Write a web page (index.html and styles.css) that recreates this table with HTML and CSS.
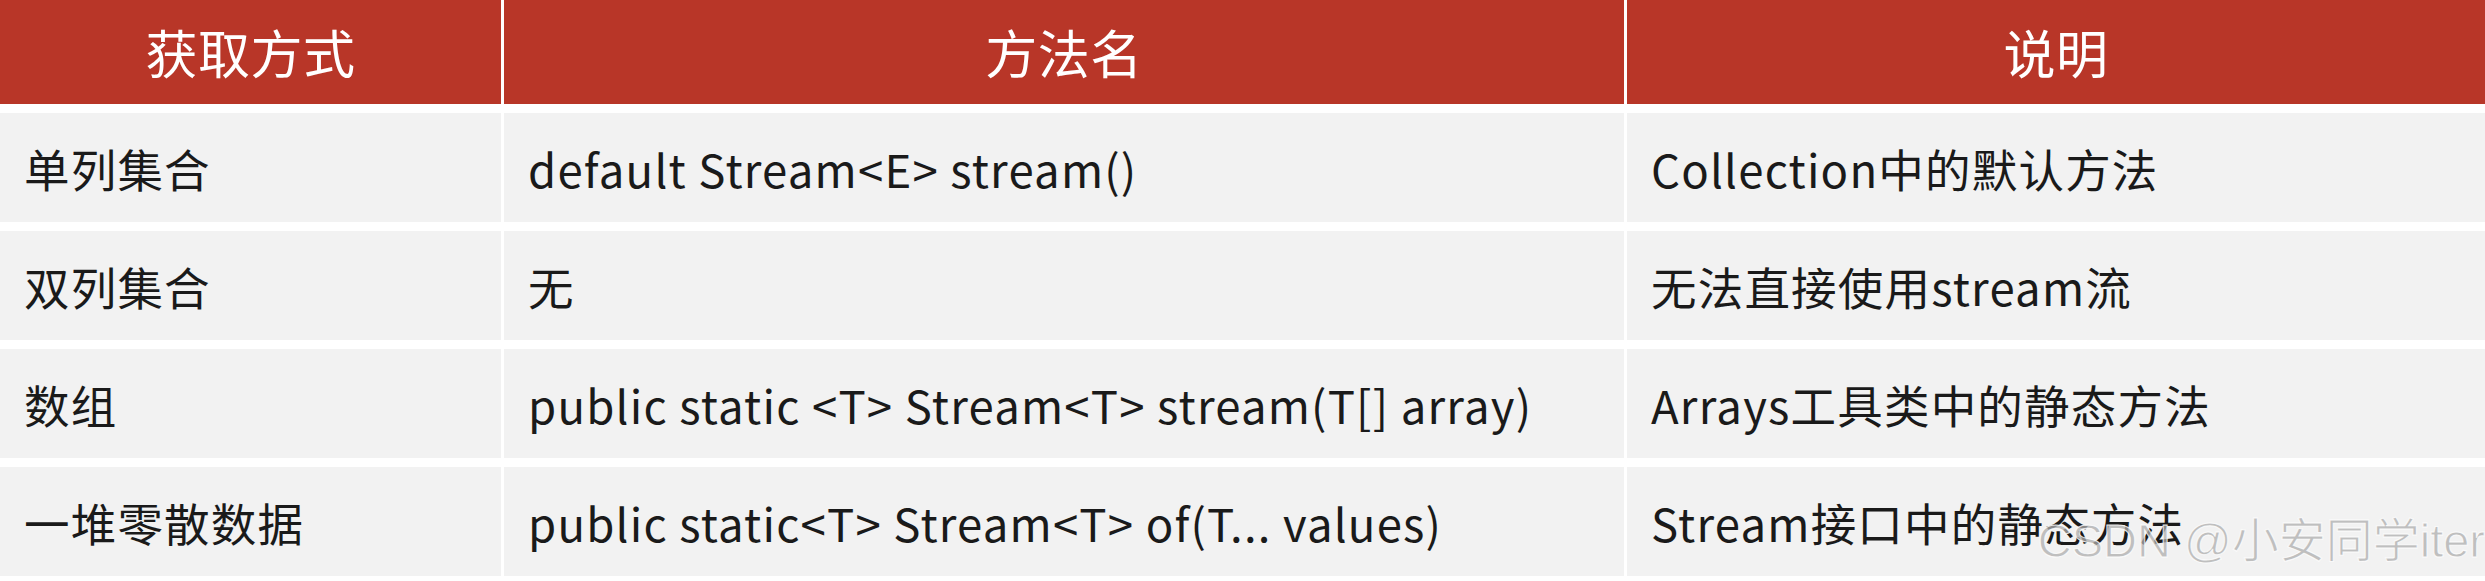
FILE: index.html
```html
<!DOCTYPE html>
<html lang="zh-CN">
<head>
<meta charset="utf-8">
<title>Stream 获取方式</title>
<link rel="stylesheet" href="styles.css">
</head>
<body>
<div class="page">
  <div class="table">
    <div class="cell head">获取方式</div>
    <div class="cell head">方法名</div>
    <div class="cell head">说明</div>

    <div class="cell">单列集合</div>
    <div class="cell">default Stream&lt;E&gt; stream()</div>
    <div class="cell">Collection中的默认方法</div>

    <div class="cell">双列集合</div>
    <div class="cell">无</div>
    <div class="cell">无法直接使用stream流</div>

    <div class="cell">数组</div>
    <div class="cell">public static &lt;T&gt; Stream&lt;T&gt; stream(T[] array)</div>
    <div class="cell">Arrays工具类中的静态方法</div>

    <div class="cell">一堆零散数据</div>
    <div class="cell">public static&lt;T&gt; Stream&lt;T&gt; of(T... values)</div>
    <div class="cell">Stream接口中的静态方法</div>
  </div>
  <div class="watermark">CSDN @小安同学iter</div>
</div>
</body>
</html>
```
FILE: styles.css
```css
html, body {
  margin: 0;
  padding: 0;
  background: #ffffff;
}

.page {
  position: relative;
  width: 2485px;
  height: 581px;
  overflow: hidden;
  font-family: "Noto Sans CJK SC", "Noto Sans", sans-serif;
}

.table {
  display: grid;
  grid-template-columns: 501px 1120px 1fr;
  grid-template-rows: 104px repeat(4, 109px);
  column-gap: 3px;
  row-gap: 9px;
}

.cell {
  display: flex;
  align-items: center;
  padding-left: 24px;
  background: #f2f2f2;
  color: #1a1a1a;
  font-size: 45.5px;
  letter-spacing: 1.2px;
  white-space: nowrap;
}

.head {
  justify-content: center;
  padding-left: 0;
  padding-bottom: 2px;
  background: #b83628;
  color: #ffffff;
  font-size: 52px;
  letter-spacing: 0.5px;
}

.watermark {
  position: absolute;
  right: 0;
  bottom: 10px;
  font-family: "Liberation Sans", "Noto Sans CJK SC", sans-serif;
  font-size: 47px;
  color: rgba(175, 175, 175, 0.75);
  -webkit-text-stroke: 1px rgba(255, 255, 255, 0.85);
  white-space: nowrap;
}
```
